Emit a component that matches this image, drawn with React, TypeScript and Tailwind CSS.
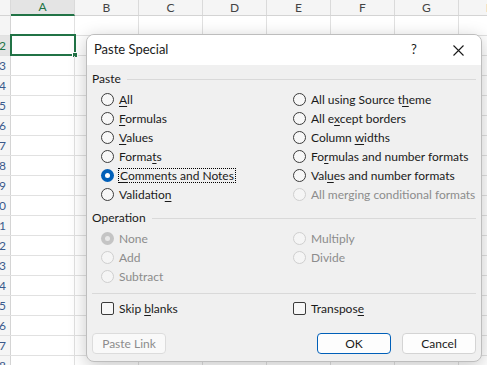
import React from "react";

const COLS = ["A", "B", "C", "D", "E", "F", "G", "H"];
const ROWS = Array.from({ length: 18 }, (_, i) => i + 1);

function Radio({ checked, disabled }: { checked?: boolean; disabled?: boolean }) {
  if (checked && disabled) {
    return (
      <span className="flex h-[13px] w-[13px] shrink-0 items-center justify-center rounded-full bg-[#c4c4c4]">
        <span className="h-[5px] w-[5px] rounded-full bg-[#e8e8e8]" />
      </span>
    );
  }
  if (checked) {
    return (
      <span className="flex h-[13px] w-[13px] shrink-0 items-center justify-center rounded-full bg-[#005fb8]">
        <span className="h-[5px] w-[5px] rounded-full bg-white" />
      </span>
    );
  }
  return (
    <span
      className={`h-[13px] w-[13px] shrink-0 rounded-full border ${
        disabled ? "border-[#cfcfcf] bg-[#f5f5f5]" : "border-[#3b3b3b] bg-[#f7f7f7]"
      }`}
    />
  );
}

// label split into [before, key, after] so the access key gets underlined
function Label({ parts, disabled }: { parts: [string, string, string]; disabled?: boolean }) {
  const [a, k, b] = parts;
  return (
    <span className={`whitespace-nowrap ${disabled ? "text-[#8c8c8c]" : "text-[#1a1a1a]"}`}>
      {a}
      <span className={disabled ? "" : "underline underline-offset-2"}>{k}</span>
      {b}
    </span>
  );
}

function Option({
  parts,
  checked,
  disabled,
  focused,
}: {
  parts: [string, string, string];
  checked?: boolean;
  disabled?: boolean;
  focused?: boolean;
}) {
  return (
    <div className="flex h-[19px] items-center gap-[5px]">
      <Radio checked={checked} disabled={disabled} />
      <span className={focused ? "-ml-px border border-dotted border-black px-px leading-[13px]" : ""}>
        <Label parts={parts} disabled={disabled} />
      </span>
    </div>
  );
}

function Legend({ text }: { text: string }) {
  return (
    <div className="flex h-4 items-center gap-[6px]">
      <span className="text-[#1a1a1a]">{text}</span>
      <div className="h-px flex-1 bg-[#d9d9d9]" />
    </div>
  );
}

function Button({ children, primary, disabled }: { children: React.ReactNode; primary?: boolean; disabled?: boolean }) {
  return (
    <div
      className={`flex h-[21px] w-[74px] items-center justify-center rounded-[4px] border ${
        primary
          ? "border-[#005fb8] bg-[#fdfdfd] text-[#1a1a1a]"
          : disabled
          ? "border-[#dcdcdc] bg-[#f9f9f9] text-[#8c8c8c]"
          : "border-[#d4d4d4] bg-[#fdfdfd] text-[#1a1a1a]"
      }`}
    >
      {children}
    </div>
  );
}

function Sheet() {
  return (
    <div className="flex flex-col bg-white">
      <div className="flex h-4 border-b border-[#d4d4d4] bg-[#f5f5f5]">
        <div className="w-[11px] shrink-0 border-r border-[#dadada]" />
        {COLS.map((c) => (
          <div
            key={c}
            className={`flex w-16 shrink-0 items-center justify-center border-r border-[#dadada] text-[12px] leading-none ${
              c === "A" ? "-mb-px border-b-2 border-b-[#217346] bg-[#e4e4e4] text-[#217346]" : "text-[#444]"
            }`}
          >
            {c}
          </div>
        ))}
      </div>
      {ROWS.map((r) => (
        <div key={r} className="flex h-5 border-b border-[#e1e1e1]">
          <div
            className={`flex w-[11px] shrink-0 items-center justify-end overflow-hidden border-r border-[#d4d4d4] pr-[4px] text-[12px] ${
              r === 2 ? "bg-[#e4e4e4] text-[#217346]" : "bg-[#f5f5f5] text-[#3a5a8c]"
            }`}
          >
            {r === 1 ? "" : r}
          </div>
          {COLS.map((c) => (
            <div key={c} className="relative w-16 shrink-0 border-r border-[#e1e1e1]">
              {r === 2 && c === "A" && (
                <div className="absolute -left-px -top-[2px] h-[22px] w-[66px] border-2 border-[#217346]">
                  <div className="absolute -bottom-[4px] -right-[4px] h-[6px] w-[6px] border border-white bg-[#217346]" />
                </div>
              )}
            </div>
          ))}
        </div>
      ))}
    </div>
  );
}

export default function App() {
  return (
    <div
      className="relative h-[365px] w-[487px] overflow-hidden text-[12px]"
      style={{ fontFamily: 'Lato, "Noto Sans", sans-serif' }}
    >
      <Sheet />
      <div className="absolute left-[86px] top-[34px] flex h-[328px] w-[396px] flex-col overflow-hidden rounded-[8px] border border-[#bdbdbd] bg-[#f0f0f0] shadow-[0_4px_18px_rgba(0,0,0,0.22)]">
        <div className="flex h-[30px] shrink-0 items-center bg-white pl-[7px]">
          <span className="flex-1 text-[13px] text-[#1a1a1a]">Paste Special</span>
          <span className="w-[20px] text-center text-[13px] text-[#1a1a1a]">?</span>
          <span className="ml-[24px] mr-[13px] flex h-[20px] w-[20px] items-center justify-center">
            <svg width="11" height="11" viewBox="0 0 11 11" fill="none" stroke="#1a1a1a" strokeWidth="1.1">
              <path d="M0.5 0.5 L10.5 10.5 M10.5 0.5 L0.5 10.5" />
            </svg>
          </span>
        </div>

        <div className="flex flex-1 flex-col px-[5px] pt-[6px]">
          <Legend text="Paste" />
          <div className="mt-[3px] grid grid-cols-[192px_1fr] pl-[9px]">
            <div className="flex flex-col">
              <Option parts={["", "A", "ll"]} />
              <Option parts={["", "F", "ormulas"]} />
              <Option parts={["", "V", "alues"]} />
              <Option parts={["Forma", "t", "s"]} />
              <Option parts={["", "C", "omments and Notes"]} checked focused />
              <Option parts={["Validatio", "n", ""]} />
            </div>
            <div className="flex flex-col">
              <Option parts={["All using Source t", "h", "eme"]} />
              <Option parts={["All e", "x", "cept borders"]} />
              <Option parts={["Column ", "w", "idths"]} />
              <Option parts={["Fo", "r", "mulas and number formats"]} />
              <Option parts={["Val", "u", "es and number formats"]} />
              <Option parts={["All merging conditional formats", "", ""]} disabled />
            </div>
          </div>

          <div className="mt-[6px]">
            <Legend text="Operation" />
          </div>
          <div className="mt-[3px] grid grid-cols-[192px_1fr] pl-[9px]">
            <div className="flex flex-col">
              <Option parts={["None", "", ""]} checked disabled />
              <Option parts={["Add", "", ""]} disabled />
              <Option parts={["Subtract", "", ""]} disabled />
            </div>
            <div className="flex flex-col">
              <Option parts={["Multiply", "", ""]} disabled />
              <Option parts={["Divide", "", ""]} disabled />
            </div>
          </div>

          <div className="mt-[7px] h-px bg-[#d9d9d9]" />

          <div className="mt-[5px] grid grid-cols-[192px_1fr] pl-[9px]">
            <div className="flex h-[19px] items-center gap-[5px]">
              <span className="h-[13px] w-[13px] rounded-[2px] border border-[#3b3b3b] bg-[#f7f7f7]" />
              <Label parts={["Skip ", "b", "lanks"]} />
            </div>
            <div className="flex h-[19px] items-center gap-[5px]">
              <span className="h-[13px] w-[13px] rounded-[2px] border border-[#3b3b3b] bg-[#f7f7f7]" />
              <Label parts={["Transpos", "e", ""]} />
            </div>
          </div>

          <div className="mt-[15px] flex items-center">
            <Button disabled>Paste Link</Button>
            <div className="flex-1" />
            <Button primary>OK</Button>
            <div className="w-[11px]" />
            <Button>Cancel</Button>
          </div>
        </div>
      </div>
    </div>
  );
}
